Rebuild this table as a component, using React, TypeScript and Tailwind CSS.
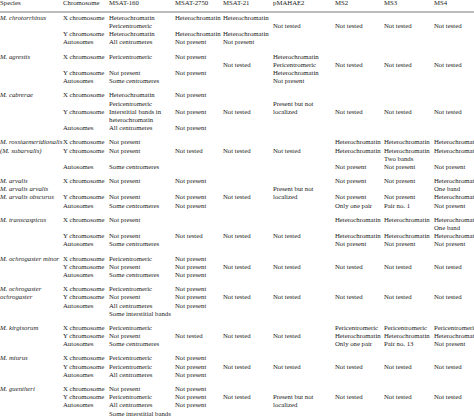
import React from "react";

type Row = {
  species: React.ReactNode[];
  cols: string[][];
};

const headers = ["Species", "Chromosome", "MSAT-160", "MSAT-2750", "MSAT-21", "pMAHAE2", "MS2", "MS3", "MS4"];

const NT1 = ["", "Not tested"];
const NT2 = ["", "", "Not tested"];

const rows: Row[] = [
  {
    species: ["M. chrotorrhinus"],
    cols: [
      ["X chromosome", "", "Y chromosome", "Autosomes"],
      ["Heterochromatin", "Pericentromeric", "Heterochromatin", "All centromeres"],
      ["Heterochromatin", "", "Heterochromatin", "Not present"],
      ["Heterochromatin", "", "Heterochromatin", "Not present"],
      NT1, NT1, NT1, NT1,
    ],
  },
  {
    species: ["M. agrestis"],
    cols: [
      ["X chromosome", "", "Y chromosome", "Autosomes"],
      ["Pericentromeric", "", "Not present", "Some centromeres"],
      ["Not present", "", "Not present"],
      NT1,
      ["Heterochromatin", "Pericentromeric", "Heterochromatin", "Not present"],
      NT1, NT1, NT1,
    ],
  },
  {
    species: ["M. cabrerae"],
    cols: [
      ["X chromosome", "", "Y chromosome", "", "Autosomes"],
      ["Heterochromatin", "Pericentromeric", "Interstitial bands in", "heterochromatin", "All centromeres"],
      ["Not present", "", "Not present", "", "Not present"],
      NT2,
      ["", "Present but not", "localized"],
      NT2, NT2, NT2,
    ],
  },
  {
    species: ["M. rossiaemeridionalis", "(M. subarvalis)"],
    cols: [
      ["X chromosome", "Y chromosome", "", "Autosomes"],
      ["Not present", "Not present", "", "Some centromeres"],
      NT1, NT1, NT1,
      ["Heterochromatin", "Heterochromatin", "", "Not present"],
      ["Heterochromatin", "Heterochromatin", "Two bands", "Not present"],
      ["Heterochromatin", "Heterochromatin", "", "Not present"],
    ],
  },
  {
    species: ["M. arvalis", "M. arvalis arvalis", "M. arvalis obscurus"],
    cols: [
      ["X chromosome", "", "Y chromosome", "Autosomes"],
      ["Not present", "", "Not present", "Some centromeres"],
      ["Not present", "", "Not present", "Not present"],
      NT2,
      ["", "Present but not", "localized"],
      ["Not present", "", "Not present", "Only one pair"],
      ["Not present", "", "Not present", "Pair no. 1"],
      ["Heterochromatin", "One band", "Heterochromatin", "Not present"],
    ],
  },
  {
    species: ["M. transcaspicus"],
    cols: [
      ["X chromosome", "", "Y chromosome", "Autosomes"],
      ["Not present", "", "Not present", "Some centromeres"],
      NT2, NT2, NT2,
      ["Heterochromatin", "", "Heterochromatin", "Not present"],
      ["Heterochromatin", "", "Heterochromatin", "Not present"],
      ["Heterochromatin", "One band", "Heterochromatin", "Not present"],
    ],
  },
  {
    species: ["M. ochrogaster minor"],
    cols: [
      ["X chromosome", "Y chromosome", "Autosomes"],
      ["Pericentromeric", "Not present", "Some centromeres"],
      ["Not present", "Not present", "Not present"],
      NT1, NT1, NT1, NT1, NT1,
    ],
  },
  {
    species: ["M. ochrogaster", "ochrogaster"],
    cols: [
      ["X chromosome", "Y chromosome", "Autosomes"],
      ["Pericentromeric", "Not present", "All centromeres", "Some interstitial bands"],
      ["Not present", "Not present", "Not present"],
      NT1, NT1, NT1, NT1, NT1,
    ],
  },
  {
    species: ["M. kirgisorum"],
    cols: [
      ["X chromosome", "Y chromosome", "Autosomes"],
      ["Pericentromeric", "Not present", "Some centromeres"],
      NT1, NT1, NT1,
      ["Pericentromeric", "Heterochromatin", "Only one pair"],
      ["Pericentromeric", "Heterochromatin", "Pair no. 13"],
      ["Pericentromeric", "Heterochromatin", "Not present"],
    ],
  },
  {
    species: ["M. miurus"],
    cols: [
      ["X chromosome", "Y chromosome", "Autosomes"],
      ["Pericentromeric", "Pericentromeric", "All centromeres"],
      ["Not present", "Not present", "Not present"],
      NT1, NT1, NT1, NT1, NT1,
    ],
  },
  {
    species: ["M. guentheri"],
    cols: [
      ["X chromosome", "Y chromosome", "Autosomes"],
      ["Not present", "Pericentromeric", "All centromeres", "Some interstitial bands"],
      ["Not present", "Not present", "Not present"],
      NT1,
      ["", "Present but not", "localized"],
      NT1, NT1, NT1,
    ],
  },
];

const gridCols = "grid grid-cols-[63px_46px_66px_48px_50px_62px_49px_50px_1fr]";

function Cell({ lines, italic }: { lines: React.ReactNode[]; italic?: boolean }) {
  return (
    <div className={italic ? "italic" : ""}>
      {lines.map((l, i) => (
        <div key={i} className="h-[8.2px] leading-[8.2px] whitespace-nowrap">
          {l}
        </div>
      ))}
    </div>
  );
}

export default function App() {
  return (
    <div
      className="w-[474px] h-[419px] overflow-hidden bg-white text-[#1a1a1a] text-[6.75px]"
      style={{ fontFamily: '"Liberation Serif", "Times New Roman", serif' }}
    >
      <div className={`${gridCols} h-[5px] leading-[5px]`}>
        {headers.map((h) => (
          <div key={h} className="whitespace-nowrap">
            {h}
          </div>
        ))}
      </div>
      <div className="mt-[6px] h-[2px] bg-[#bdbdbd]" />
      <div className="flex flex-col gap-[6px] pt-[0.9px]">
        {rows.map((r, i) => (
          <div key={i} className={gridCols}>
            <Cell lines={r.species} italic />
            {r.cols.map((c, j) => (
              <Cell key={j} lines={c} />
            ))}
          </div>
        ))}
      </div>
    </div>
  );
}
